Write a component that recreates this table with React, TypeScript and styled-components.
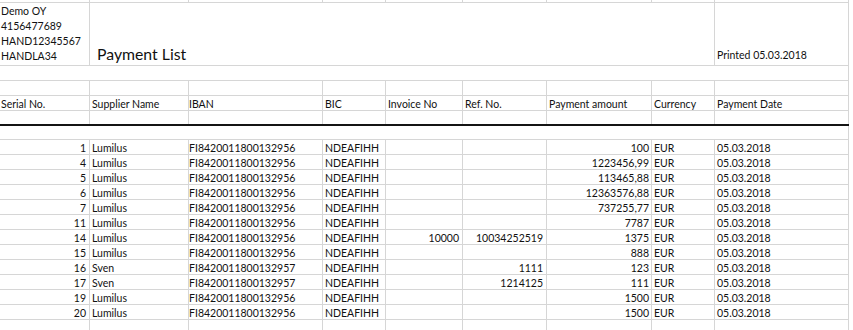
import React from 'react';
import styled, { createGlobalStyle } from 'styled-components';

const GlobalStyle = createGlobalStyle`
  html, body { margin: 0; padding: 0; background: #ffffff; }
  body {
    font-family: Lato, "Open Sans", sans-serif;
    color: #111111;
    overflow: hidden;
  }
`;

const GRID = '#d6d6d6';

type Col = { w: number; align: 'left' | 'right'; pl: number; pr: number };

const COLS: Col[] = [
  { w: 90, align: 'right', pl: 1, pr: 3 },
  { w: 99, align: 'left', pl: 2, pr: 2 },
  { w: 134, align: 'left', pl: 0, pr: 2 },
  { w: 63, align: 'left', pl: 2, pr: 2 },
  { w: 77, align: 'right', pl: 2, pr: 3 },
  { w: 84, align: 'right', pl: 2, pr: 3 },
  { w: 105, align: 'right', pl: 2, pr: 2 },
  { w: 63, align: 'left', pl: 2, pr: 2 },
  { w: 134, align: 'left', pl: 2, pr: 2 },
];

const HEADERS = [
  'Serial No.',
  'Supplier Name',
  'IBAN',
  'BIC',
  'Invoice No',
  'Ref. No.',
  'Payment amount',
  'Currency',
  'Payment Date',
];

const IBAN6 = 'FI8420011800132956';
const IBAN7 = 'FI8420011800132957';

const ROWS: string[][] = [
  ['1', 'Lumilus', IBAN6, 'NDEAFIHH', '', '', '100', 'EUR', '05.03.2018'],
  ['4', 'Lumilus', IBAN6, 'NDEAFIHH', '', '', '1223456,99', 'EUR', '05.03.2018'],
  ['5', 'Lumilus', IBAN6, 'NDEAFIHH', '', '', '113465,88', 'EUR', '05.03.2018'],
  ['6', 'Lumilus', IBAN6, 'NDEAFIHH', '', '', '12363576,88', 'EUR', '05.03.2018'],
  ['7', 'Lumilus', IBAN6, 'NDEAFIHH', '', '', '737255,77', 'EUR', '05.03.2018'],
  ['11', 'Lumilus', IBAN6, 'NDEAFIHH', '', '', '7787', 'EUR', '05.03.2018'],
  ['14', 'Lumilus', IBAN6, 'NDEAFIHH', '10000', '10034252519', '1375', 'EUR', '05.03.2018'],
  ['15', 'Lumilus', IBAN6, 'NDEAFIHH', '', '', '888', 'EUR', '05.03.2018'],
  ['16', 'Sven', IBAN7, 'NDEAFIHH', '', '1111', '123', 'EUR', '05.03.2018'],
  ['17', 'Sven', IBAN7, 'NDEAFIHH', '', '1214125', '111', 'EUR', '05.03.2018'],
  ['19', 'Lumilus', IBAN6, 'NDEAFIHH', '', '', '1500', 'EUR', '05.03.2018'],
  ['20', 'Lumilus', IBAN6, 'NDEAFIHH', '', '', '1500', 'EUR', '05.03.2018'],
];

const FULL = COLS.reduce((s, c) => s + c.w, 0);
const MID = COLS.slice(1, 8).reduce((s, c) => s + c.w, 0);

const Sheet = styled.div`
  width: 853px;
  height: 330px;
  overflow: hidden;
  display: flex;
  flex-direction: column;
`;

const Row = styled.div<{ $h: number; $thick?: boolean }>`
  display: flex;
  flex: none;
  width: ${FULL}px;
  height: ${(p) => p.$h}px;
  box-sizing: border-box;
  border-bottom: ${(p) => (p.$thick ? '2px solid #141414' : `1px solid ${GRID}`)};
`;

const Cell = styled.div<{ $w: number; $align?: 'left' | 'right'; $pl?: number; $pr?: number }>`
  flex: none;
  width: ${(p) => p.$w}px;
  height: 100%;
  box-sizing: border-box;
  border-right: 1px solid ${GRID};
  display: flex;
  align-items: flex-end;
  justify-content: ${(p) => (p.$align === 'right' ? 'flex-end' : 'flex-start')};
  padding: 0 ${(p) => p.$pr ?? 2}px 0 ${(p) => p.$pl ?? 2}px;
  font-size: 10.5px;
  line-height: 12px;
  white-space: nowrap;
  overflow: hidden;
`;

const InfoCell = styled(Cell)`
  flex-direction: column;
  align-items: flex-start;
  justify-content: flex-end;
  line-height: 15px;
  padding-bottom: 1px;
`;

const InfoLine = styled.span`
  display: block;
`;

const TitleCell = styled(Cell)`
  font-size: 15.8px;
  line-height: 18px;
  padding-left: 7px;
  padding-bottom: 2px;
`;

const PrintedCell = styled(Cell)`
  padding-bottom: 4px;
`;

function GridRow({ values, h = 15, thick }: { values?: string[]; h?: number; thick?: boolean }) {
  return (
    <Row $h={h} $thick={thick}>
      {COLS.map((c, i) => {
        const v = values ? values[i] : '';
        const align = values === HEADERS ? 'left' : c.align;
        return (
          <Cell key={i} $w={c.w} $align={align} $pl={c.pl} $pr={c.pr}>
            {v}
          </Cell>
        );
      })}
    </Row>
  );
}

export default function App() {
  return (
    <>
      <GlobalStyle />
      <Sheet>
        <GridRow h={3} />
        <Row $h={63}>
          <InfoCell $w={COLS[0].w} $pl={1}>
            <InfoLine>Demo OY</InfoLine>
            <InfoLine>4156477689</InfoLine>
            <InfoLine>HAND12345567</InfoLine>
            <InfoLine>HANDLA34</InfoLine>
          </InfoCell>
          <TitleCell $w={MID}>Payment List</TitleCell>
          <PrintedCell $w={COLS[8].w}>Printed 05.03.2018</PrintedCell>
        </Row>
        <Row $h={15}>
          <Cell $w={FULL} />
        </Row>
        <GridRow />
        <GridRow values={HEADERS} />
        <GridRow h={15} thick />
        <Row $h={14}>
          <Cell $w={FULL} />
        </Row>
        {ROWS.map((r, i) => (
          <GridRow key={i} values={r} />
        ))}
        <GridRow />
      </Sheet>
    </>
  );
}
